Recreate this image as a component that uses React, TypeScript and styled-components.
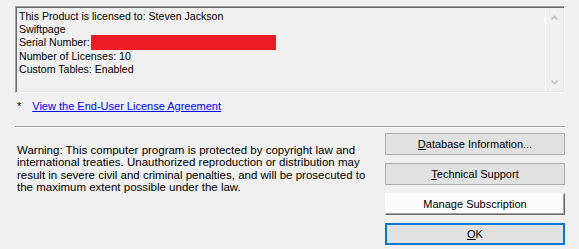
import styled, { createGlobalStyle } from "styled-components";

const GlobalStyle = createGlobalStyle`
  html, body {
    margin: 0;
    padding: 0;
    background: #f0f0f0;
  }
  body {
    font-family: "Liberation Sans", Arial, sans-serif;
    font-size: 11px;
    color: #000;
  }
`;

const Page = styled.div`
  width: 579px;
  height: 249px;
  box-sizing: border-box;
  padding: 6px 14px 0 15px;
  display: flex;
  flex-direction: column;
  overflow: hidden;
`;

const InfoBox = styled.div`
  height: 87px;
  box-sizing: border-box;
  display: flex;
  border-top: 1px solid #a0a0a0;
  border-left: 1px solid #a0a0a0;
  border-right: 1px solid #ffffff;
  border-bottom: 1px solid #ffffff;
  box-shadow: inset 1px 1px 0 #696969, inset -1px -1px 0 #e3e3e3;
`;

const InfoText = styled.div`
  flex: 1;
  padding: 3px 3px;
  font-size: 10.6px;
  line-height: 13px;
`;

const Redacted = styled.span`
  display: inline-block;
  width: 185px;
  height: 15px;
  margin-left: 1px;
  background: #ed1c24;
  vertical-align: top;
  margin-top: -1px;
`;

const ScrollTrack = styled.div`
  width: 17px;
  border-left: 1px solid #ffffff;
  margin: 1px 1px 1px 0;
  display: flex;
  flex-direction: column;
  justify-content: space-between;
  align-items: center;
  padding: 7px 0 6px;
`;

const LinkRow = styled.div`
  margin-top: 7px;
  display: flex;
  align-items: center;
  gap: 11px;
  line-height: 13px;
  padding-left: 2px;
`;

const Star = styled.span`
  font-size: 11px;
`;

const Link = styled.a`
  color: #0000ff;
  text-decoration: underline;
  cursor: pointer;
`;

const Divider = styled.div`
  margin-top: 13px;
  border-top: 1px solid #a0a0a0;
  border-bottom: 1px solid #ffffff;
`;

const Bottom = styled.div`
  display: grid;
  grid-template-columns: 1fr 180px;
  column-gap: 12px;
`;

const Warning = styled.p`
  margin: 16px 0 0 2px;
  font-size: 11.5px;
  line-height: 12.4px;
`;

const ButtonColumn = styled.div`
  display: flex;
  flex-direction: column;
  gap: 8px;
  padding-top: 5px;
`;

const Button = styled.button<{ $variant?: "flat" | "default" }>`
  height: 22px;
  box-sizing: border-box;
  font-family: "Liberation Sans", Arial, sans-serif;
  font-size: 11px;
  color: #000;
  padding: 0;
  background: ${(p) => (p.$variant === "flat" ? "#fbfbfb" : "#e1e1e1")};
  border: ${(p) =>
    p.$variant === "default" ? "2px solid #0078d7" : "1px solid #adadad"};
  ${(p) =>
    p.$variant === "flat" &&
    `
    border-top-color: #ffffff;
    border-left-color: #ffffff;
    border-right-color: #696969;
    border-bottom-color: #696969;
    box-shadow: inset -1px -1px 0 #a0a0a0;
  `}
  u {
    text-decoration: underline;
  }
`;

const Chevron = ({ up }: { up?: boolean }) => (
  <svg width="7" height="5" viewBox="0 0 7 5">
    <path
      d={up ? "M0.5 4.5 L3.5 1.5 L6.5 4.5" : "M0.5 0.5 L3.5 3.5 L6.5 0.5"}
      fill="none"
      stroke="#c0c0c0"
      strokeWidth="1.6"
    />
  </svg>
);

export default function App() {
  return (
    <>
      <GlobalStyle />
      <Page>
        <InfoBox>
          <InfoText>
            This Product is licensed to: Steven Jackson
            <br />
            Swiftpage
            <br />
            Serial Number:<Redacted />
            <br />
            Number of Licenses: 10
            <br />
            Custom Tables: Enabled
          </InfoText>
          <ScrollTrack>
            <Chevron up />
            <Chevron />
          </ScrollTrack>
        </InfoBox>
        <LinkRow>
          <Star>*</Star>
          <Link>View the End-User License Agreement</Link>
        </LinkRow>
        <Divider />
        <Bottom>
          <Warning>
            Warning: This computer program is protected by copyright law and
            international treaties. Unauthorized reproduction or distribution
            may result in severe civil and criminal penalties, and will be
            prosecuted to the maximum extent possible under the law.
          </Warning>
          <ButtonColumn>
            <Button>
              <u>D</u>atabase Information...
            </Button>
            <Button>
              <u>T</u>echnical Support
            </Button>
            <Button $variant="flat">Manage Subscription</Button>
            <Button $variant="default">
              <u>O</u>K
            </Button>
          </ButtonColumn>
        </Bottom>
      </Page>
    </>
  );
}
